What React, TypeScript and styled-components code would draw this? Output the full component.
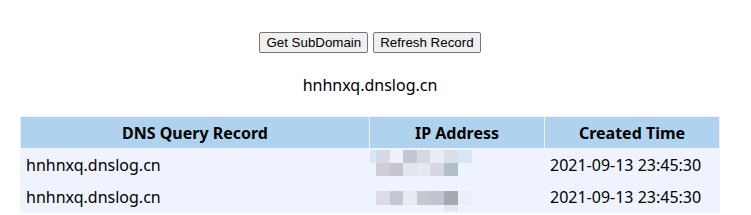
import React from "react";
import styled, { createGlobalStyle } from "styled-components";

const Global = createGlobalStyle`
  html, body { margin: 0; padding: 0; background: #ffffff; }
  body { font-family: "Liberation Sans", Arial, sans-serif; }
`;

const Page = styled.div`
  width: 740px;
  display: flex;
  flex-direction: column;
  align-items: center;
  padding-top: 32px;
`;

const ButtonBar = styled.div`
  display: flex;
  gap: 5px;
`;

const Button = styled.button`
  font-family: "Liberation Sans", Arial, sans-serif;
  font-size: 13.33px;
  height: 21px;
  padding: 1px 6px;
  background: #efefef;
  color: #000;
  border: 1px solid #767676;
  border-radius: 2px;
  line-height: 15px;
`;

const Domain = styled.div`
  margin-top: 21px;
  font-family: "Noto Sans", "Open Sans", sans-serif;
  font-size: 16px;
  line-height: 22px;
  color: #000;
`;

const Table = styled.table`
  margin-top: 20px;
  width: 700px;
  border-spacing: 1px;
  background: #eff3fd;
  font-family: "Noto Sans", "Open Sans", sans-serif;
  font-size: 16px;
  color: #000;
  table-layout: fixed;
`;

const Th = styled.th<{ $w: number }>`
  width: ${(p) => p.$w}px;
  height: 31px;
  padding: 0;
  background: #afd3ef;
  font-weight: 700;
  text-align: center;
  box-sizing: border-box;
`;

const Td = styled.td`
  height: 31px;
  padding: 0 5px;
  background: #eff3fd;
  text-align: left;
  box-sizing: border-box;
  white-space: nowrap;
`;

const MosaicCell = styled(Td)`
  padding: 0;
  vertical-align: top;
`;

const MosaicSvg = styled.svg`
  display: block;
`;

type Block = [number, number, number, number, string];

const mosaic1: Block[] = [
  [0, 1, 6, 13, "#d6e6f6"],
  [6, 1, 14, 13, "#d8d9e1"],
  [20, 1, 13, 13, "#eff0f8"],
  [33, 1, 14, 13, "#c5c6d3"],
  [47, 1, 13, 13, "#d6d8df"],
  [60, 1, 14, 13, "#eaebf6"],
  [74, 1, 14, 13, "#dcdee6"],
  [88, 1, 14, 13, "#d6e6f6"],
  [6, 14, 14, 13, "#d0cdd6"],
  [20, 14, 13, 13, "#c4c7d2"],
  [33, 14, 14, 13, "#e3e5ef"],
  [47, 14, 13, 13, "#e5e8ef"],
  [60, 14, 14, 13, "#d8d7e1"],
  [74, 14, 14, 13, "#b1bfca"],
];

const mosaic2: Block[] = [
  [6, 10, 14, 14, "#dcdce6"],
  [20, 10, 13, 14, "#c3c8d2"],
  [33, 10, 14, 14, "#e8ebf3"],
  [47, 10, 13, 14, "#c7c8cd"],
  [60, 10, 14, 14, "#c3c4d3"],
  [74, 10, 14, 14, "#a5a9b2"],
  [88, 10, 14, 14, "#eaeff9"],
  [74, 24, 14, 6, "#e1e6f0"],
];

const Mosaic = ({ blocks }: { blocks: Block[] }) => (
  <MosaicSvg width="110" height="31" viewBox="0 0 110 31">
    {blocks.map(([x, y, w, h, c], i) => (
      <rect key={i} x={x} y={y} width={w} height={h} fill={c} />
    ))}
  </MosaicSvg>
);

const rows = [
  { domain: "hnhnxq.dnslog.cn", blocks: mosaic1, time: "2021-09-13 23:45:30" },
  { domain: "hnhnxq.dnslog.cn", blocks: mosaic2, time: "2021-09-13 23:45:30" },
];

export default function App() {
  return (
    <>
      <Global />
      <Page>
        <ButtonBar>
          <Button>Get SubDomain</Button>
          <Button>Refresh Record</Button>
        </ButtonBar>
        <Domain>hnhnxq.dnslog.cn</Domain>
        <Table>
          <thead>
            <tr>
              <Th $w={348}>DNS Query Record</Th>
              <Th $w={174}>IP Address</Th>
              <Th $w={174}>Created Time</Th>
            </tr>
          </thead>
          <tbody>
            {rows.map((r, i) => (
              <tr key={i}>
                <Td>{r.domain}</Td>
                <MosaicCell>
                  <Mosaic blocks={r.blocks} />
                </MosaicCell>
                <Td>{r.time}</Td>
              </tr>
            ))}
          </tbody>
        </Table>
      </Page>
    </>
  );
}
